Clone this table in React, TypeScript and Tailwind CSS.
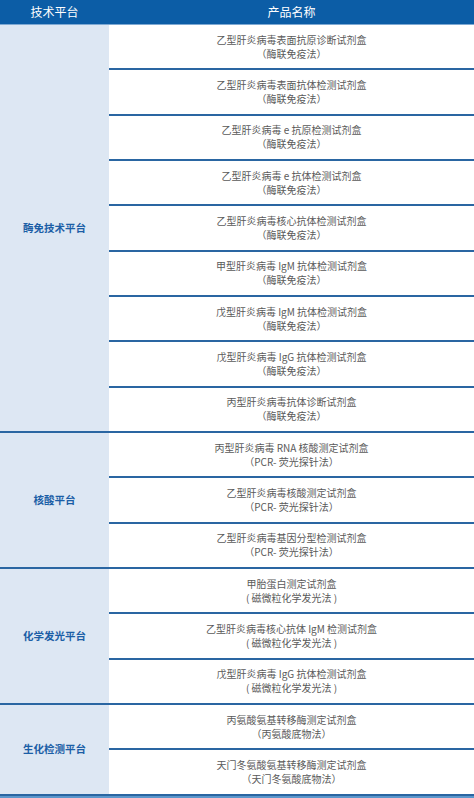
import React from "react";

type Group = { name: string; rows: [string, string][] };

const groups: Group[] = [
  {
    name: "酶免技术平台",
    rows: [
      ["乙型肝炎病毒表面抗原诊断试剂盒", "（酶联免疫法）"],
      ["乙型肝炎病毒表面抗体检测试剂盒", "（酶联免疫法）"],
      ["乙型肝炎病毒 e 抗原检测试剂盒", "（酶联免疫法）"],
      ["乙型肝炎病毒 e 抗体检测试剂盒", "（酶联免疫法）"],
      ["乙型肝炎病毒核心抗体检测试剂盒", "（酶联免疫法）"],
      ["甲型肝炎病毒 IgM 抗体检测试剂盒", "（酶联免疫法）"],
      ["戊型肝炎病毒 IgM 抗体检测试剂盒", "（酶联免疫法）"],
      ["戊型肝炎病毒 IgG 抗体检测试剂盒", "（酶联免疫法）"],
      ["丙型肝炎病毒抗体诊断试剂盒", "（酶联免疫法）"],
    ],
  },
  {
    name: "核酸平台",
    rows: [
      ["丙型肝炎病毒 RNA 核酸测定试剂盒", "（PCR- 荧光探针法）"],
      ["乙型肝炎病毒核酸测定试剂盒", "（PCR- 荧光探针法）"],
      ["乙型肝炎病毒基因分型检测试剂盒", "（PCR- 荧光探针法）"],
    ],
  },
  {
    name: "化学发光平台",
    rows: [
      ["甲胎蛋白测定试剂盒", "( 磁微粒化学发光法 )"],
      ["乙型肝炎病毒核心抗体 IgM 检测试剂盒", "( 磁微粒化学发光法 )"],
      ["戊型肝炎病毒 IgG 抗体检测试剂盒", "( 磁微粒化学发光法 )"],
    ],
  },
  {
    name: "生化检测平台",
    rows: [
      ["丙氨酸氨基转移酶测定试剂盒", "（丙氨酸底物法）"],
      ["天门冬氨酸氨基转移酶测定试剂盒", "（天门冬氨酸底物法）"],
    ],
  },
];

export default function App() {
  return (
    <div
      className="w-[474px] h-[798px] bg-white overflow-hidden"
      style={{ fontFamily: '"Noto Sans CJK SC", "Noto Sans", sans-serif' }}
    >
      <div className="flex h-[25px] bg-[#0c5da6] border-b border-[#7ea9d3] text-white text-[12px] leading-[24px]">
        <div className="w-[109px] flex items-center justify-center">技术平台</div>
        <div className="flex-1 flex items-center justify-center">产品名称</div>
      </div>
      {groups.map((g) => (
        <div key={g.name} className="flex border-b-2 border-[#2a66a2]">
          <div className="w-[109px] shrink-0 bg-[#dde7f3] flex items-center justify-center text-[10.5px] font-bold text-[#1b5ea6]">
            {g.name}
          </div>
          <div className="flex-1 flex flex-col">
            {g.rows.map((r, i) => (
              <div
                key={i}
                className={
                  i < g.rows.length - 1
                    ? "h-[45.33px] border-b-2 border-[#2a66a2] flex flex-col items-center justify-center text-[10px] leading-[14px] text-[#5a5a5a]"
                    : "h-[43.33px] flex flex-col items-center justify-center text-[10px] leading-[14px] text-[#5a5a5a]"
                }
              >
                <div>{r[0]}</div>
                <div>{r[1]}</div>
              </div>
            ))}
          </div>
        </div>
      ))}
      <div className="h-[4px] bg-[#5b97cc]" />
    </div>
  );
}
